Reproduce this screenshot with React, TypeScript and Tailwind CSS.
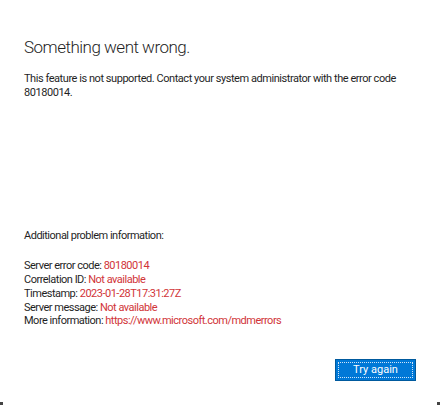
export default function App() {
  const details: [string, string][] = [
    ['Server error code:', '80180014'],
    ['Correlation ID:', 'Not available'],
    ['Timestamp:', '2023-01-28T17:31:27Z'],
    ['Server message:', 'Not available'],
    ['More information:', 'https://www.microsoft.com/mdmerrors'],
  ]

  return (
    <div className="relative w-[440px] h-[405px] bg-white flex flex-col px-6 pt-[34px] pb-6 text-[#1f1f1f] font-['Roboto',sans-serif]">
      {/* Heading */}
      <h1 className="text-[17px] font-light leading-[26px] tracking-[-0.5px]">Something went wrong.</h1>

      <p className="mt-[12px] text-[11px] leading-[14px] tracking-[-0.45px]">
        This feature is not supported. Contact your system administrator with the error code 80180014.
      </p>

      {/* Details */}
      <div className="mt-auto text-[11px] leading-[13.75px] tracking-[-0.5px]">
        <p className="mb-[17px]">Additional problem information:</p>
        {details.map(([label, value]) => (
          <p key={label}>
            {label} <span className="text-[#d13438]">{value}</span>
          </p>
        ))}
      </div>

      <div className="flex justify-end mt-[31px]">
        <button className="w-[81px] h-[22px] bg-[#0078d7] border border-[#005a9e] p-[2px] text-white text-[11px]">
          <span className="flex items-center justify-center w-full h-full border border-dotted border-[#cfe4f7]">Try again</span>
        </button>
      </div>

      {/* Corner shadow marks */}
      <div className="absolute left-0 bottom-0 w-[3px] h-[3px] bg-[#444]" />
      <div className="absolute right-0 bottom-0 w-[3px] h-[3px] bg-[#444]" />
    </div>
  )
}
